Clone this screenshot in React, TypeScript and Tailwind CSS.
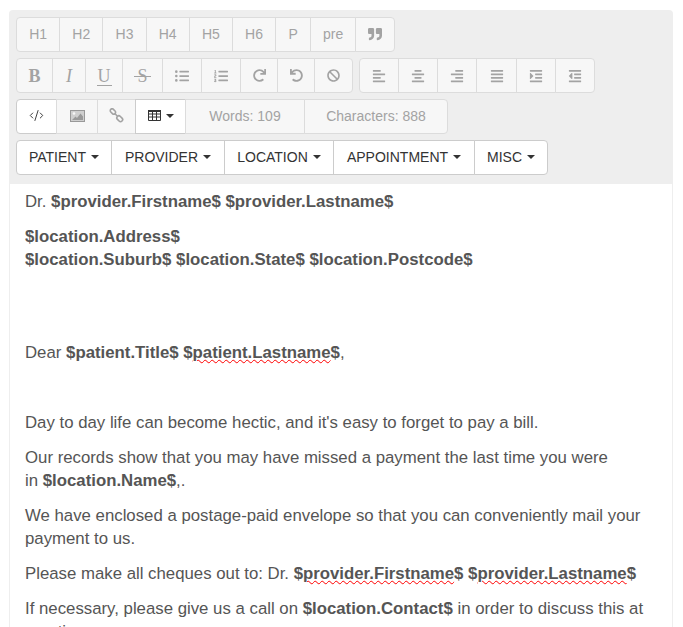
import type { ReactNode } from "react";
import { CodeXml } from "lucide-react";
import {
  FaAlignCenter,
  FaAlignJustify,
  FaAlignLeft,
  FaAlignRight,
  FaBan,
  FaIndent,
  FaListOl,
  FaListUl,
  FaOutdent,
  FaQuoteRight,
  FaRedo,
  FaUndo,
} from "react-icons/fa";

const Caret = () => (
  <span className="ml-[5px] inline-block h-0 w-0 border-x-4 border-t-4 border-x-transparent border-t-current align-middle" />
);

const PictureIcon = () => (
  <svg width="15" height="12" viewBox="0 0 15 12">
    <rect x="0.5" y="0.5" width="14" height="11" fill="#cfcfcf" stroke="#999" />
    <circle cx="4" cy="3.5" r="1.3" fill="#f7f7f7" />
    <path d="M2 10 L5.5 6.5 L7 8 L10.5 3.5 L13 6.5 V10 Z" fill="#999" />
  </svg>
);

const ChainIcon = () => (
  <svg width="15" height="15" viewBox="0 0 13 13" fill="none" stroke="currentColor" strokeWidth="1.4">
    <rect x="-2.6" y="-1.6" width="5.2" height="3.2" rx="1.6" transform="translate(3.4 3) rotate(45)" />
    <rect x="-2.8" y="-1.8" width="5.6" height="3.6" rx="1.8" transform="translate(9.3 9.3) rotate(45)" />
    <path d="M5.2 5 L7.6 7.4" />
  </svg>
);

const TableIcon = () => (
  <svg width="13" height="11" viewBox="0 0 13 11" fill="none" stroke="currentColor">
    <path d="M0 1 H13" strokeWidth="2" />
    <path d="M0.5 0.5 V10.5 H12.5 V0.5 M0 4 H13 M0 7 H13 M4.5 2 V10.5 M8.5 2 V10.5" />
  </svg>
);

type BtnProps = {
  width: string;
  children: ReactNode;
  active?: boolean;
};

const Btn = ({ width, children, active }: BtnProps) => (
  <button
    className={`-ml-px flex h-[35px] items-center justify-center border first:ml-0 first:rounded-l last:rounded-r ${width} ${
      active ? "border-[#ccc] bg-white text-[#333]" : "border-[#dcdcdc] bg-[#f7f7f7] text-[#a3a3a3]"
    }`}
  >
    {children}
  </button>
);

const Group = ({ children }: { children: ReactNode }) => (
  <div className="flex">{children}</div>
);

const headings = [
  ["H1", "w-[44.2px] pb-0.5"],
  ["H2", "w-[44.2px] pb-0.5"],
  ["H3", "w-[44.2px] pb-0.5"],
  ["H4", "w-[44.2px] pb-0.5"],
  ["H5", "w-[44.2px] pb-0.5"],
  ["H6", "w-[44.2px] pb-0.5"],
  ["P", "w-[36px] pb-0.5"],
  ["pre", "w-[46px] pb-0.5"],
];

const serif = "font-['Liberation_Serif',serif] text-[18px] leading-none";

const Misspelt = ({ children }: { children: ReactNode }) => (
  <span className="underline decoration-[#f00] decoration-wavy decoration-1 underline-offset-1">
    {children}
  </span>
);

export default function App() {
  return (
    <div className="h-[627px] overflow-hidden bg-white pt-2.5 pl-[9px] pr-[10px] font-['Liberation_Sans',Arial,sans-serif] text-sm">
      <div className="flex flex-col gap-1.5 rounded-t bg-[#eee] px-[7px] pt-[7px] pb-[9px]">
        <Group>
          {headings.map(([label, w]) => (
            <Btn key={label} width={w}>
              {label}
            </Btn>
          ))}
          <Btn width="w-[40px] pb-0.5">
            <FaQuoteRight className="text-[14px]" />
          </Btn>
        </Group>

        <div className="flex gap-1.5">
          <Group>
            <Btn width="w-[37px]">
              <span className={`${serif} font-bold`}>B</span>
            </Btn>
            <Btn width="w-[34px]">
              <span className={`${serif} italic`}>I</span>
            </Btn>
            <Btn width="w-[38px]">
              <span className={`${serif} relative`}>
                U
                <span className="absolute -inset-x-px -bottom-px h-px bg-current" />
              </span>
            </Btn>
            <Btn width="w-[41px]">
              <span className={`${serif} relative`}>
                S
                <span className="absolute -inset-x-[3px] top-1/2 h-px bg-current" />
              </span>
            </Btn>
            <Btn width="w-[40px]">
              <FaListUl className="text-[14px]" />
            </Btn>
            <Btn width="w-[40px]">
              <FaListOl className="text-[14px]" />
            </Btn>
            <Btn width="w-[38px]">
              <FaRedo className="text-[13px]" />
            </Btn>
            <Btn width="w-[38px]">
              <FaUndo className="text-[13px]" />
            </Btn>
            <Btn width="w-[39px]">
              <FaBan className="text-[13px]" />
            </Btn>
          </Group>
          <Group>
            <Btn width="w-[40px]">
              <FaAlignLeft className="text-[14px]" />
            </Btn>
            <Btn width="w-[40px]">
              <FaAlignCenter className="text-[14px]" />
            </Btn>
            <Btn width="w-[40px]">
              <FaAlignRight className="text-[14px]" />
            </Btn>
            <Btn width="w-[41px]">
              <FaAlignJustify className="text-[14px]" />
            </Btn>
            <Btn width="w-[40px]">
              <FaIndent className="text-[14px]" />
            </Btn>
            <Btn width="w-[40px]">
              <FaOutdent className="text-[14px]" />
            </Btn>
          </Group>
        </div>

        <Group>
          <Btn width="w-[41px] pb-0.5" active>
            <CodeXml size={15} strokeWidth={1.5} />
          </Btn>
          <Btn width="w-[42px] pb-0.5">
            <PictureIcon />
          </Btn>
          <Btn width="w-[39px] pb-0.5">
            <ChainIcon />
          </Btn>
          <Btn width="w-[51px] pb-0.5" active>
            <TableIcon />
            <Caret />
          </Btn>
          <Btn width="w-[120px] pb-0.5">Words: 109</Btn>
          <Btn width="w-[144px] pb-0.5">Characters: 888</Btn>
        </Group>

        <Group>
          <Btn width="w-[96px] pb-0.5" active>
            PATIENT
            <Caret />
          </Btn>
          <Btn width="w-[114px] pb-0.5" active>
            PROVIDER
            <Caret />
          </Btn>
          <Btn width="w-[110px] pb-0.5" active>
            LOCATION
            <Caret />
          </Btn>
          <Btn width="w-[142px] pb-0.5" active>
            APPOINTMENT
            <Caret />
          </Btn>
          <Btn width="w-[74px] pb-0.5" active>
            MISC
            <Caret />
          </Btn>
        </Group>
      </div>

      <div className="border-x border-[#eee] px-[15px] pt-[6px] text-[16.8px] leading-[23px] text-[#555] [&_p]:mb-3">
        <p>
          Dr. <b>$provider.Firstname$</b> <b>$provider.Lastname$</b>
        </p>
        <p>
          <b>$location.Address$</b>
          <br />
          <b>$location.Suburb$</b> <b>$location.State$</b> <b>$location.Postcode$</b>
        </p>
        <p>
          <br />
          <br />
        </p>
        <p>
          Dear <b>$patient.Title$</b> <b>$<Misspelt>patient.Lastname</Misspelt>$</b>,
        </p>
        <p>
          <br />
        </p>
        <p>Day to day life can become hectic, and it's easy to forget to pay a bill.</p>
        <p>
          Our records show that you may have missed a payment the last time you were
          <br />
          in <b>$location.Name$</b>,.
        </p>
        <p>
          We have enclosed a postage-paid envelope so that you can conveniently mail your
          payment to us.
        </p>
        <p>
          Please make all cheques out to: Dr. <b>$<Misspelt>provider.Firstname</Misspelt>$</b>{" "}
          <b>$<Misspelt>provider.Lastname</Misspelt>$</b>
        </p>
        <p>
          If necessary, please give us a call on <b>$location.Contact$</b> in order to discuss
          this at meeting.
        </p>
      </div>
    </div>
  );
}
